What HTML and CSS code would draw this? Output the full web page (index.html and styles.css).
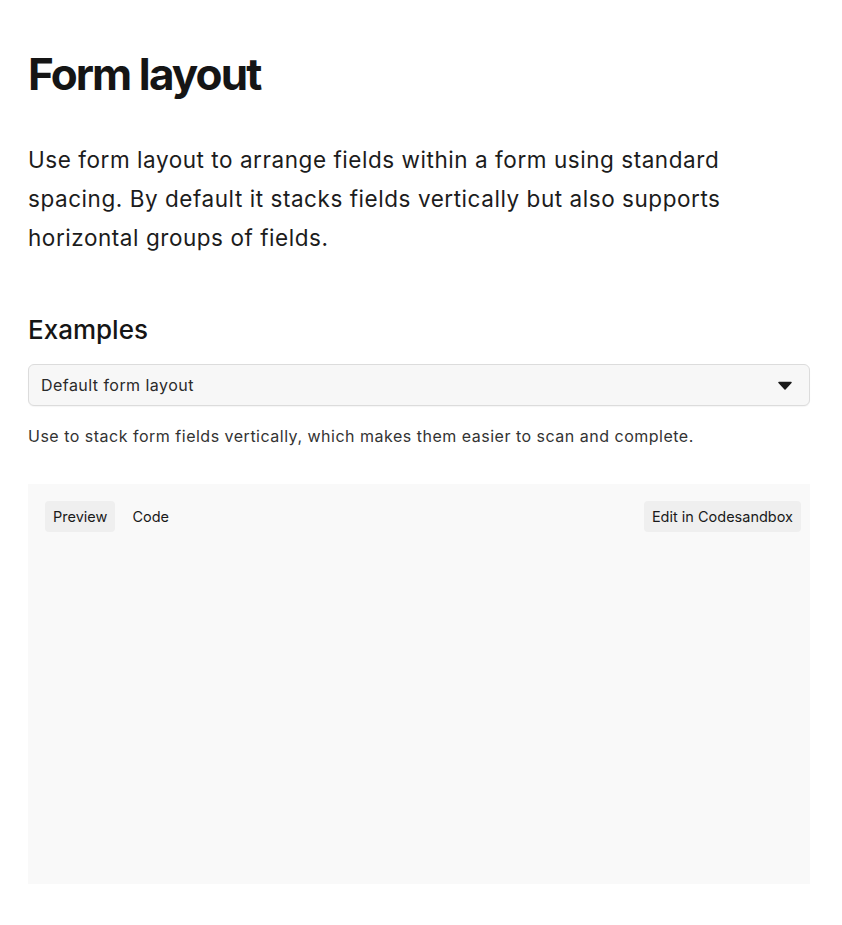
FILE: index.html
```html
<!DOCTYPE html>
<html>
<head>
<meta charset="utf-8">
<link rel="stylesheet" href="styles.css">
</head>
<body>
<main class="page">
  <h1 class="title">Form layout</h1>
  <p class="lead">Use form layout to arrange fields within a form using standard spacing. By default it stacks fields vertically but also supports horizontal groups of fields.</p>
  <h2 class="section">Examples</h2>
  <div class="select">
    <span>Default form layout</span>
    <svg class="caret" width="14" height="9" viewBox="0 0 14 9"><path d="M1 1.5 L13 1.5 L7 8 Z" fill="#1a1a1a" stroke="#1a1a1a" stroke-width="1.5" stroke-linejoin="round"/></svg>
  </div>
  <p class="desc">Use to stack form fields vertically, which makes them easier to scan and complete.</p>
  <div class="preview">
    <div class="toolbar">
      <div class="tabs">
        <span class="btn active">Preview</span>
        <span class="btn">Code</span>
      </div>
      <span class="btn active">Edit in Codesandbox</span>
    </div>
  </div>
</main>
</body>
</html>
```
FILE: styles.css
```css
* { box-sizing: border-box; }
body {
  margin: 0;
  background: #fff;
  color: #151515;
  font-family: Inter, "Noto Sans", sans-serif;
}
.page {
  padding: 46px 32px 40px 28px;
  width: 842px;
}
.title {
  margin: 0;
  font-size: 44px;
  font-weight: 700;
  letter-spacing: -1.9px;
  line-height: 56px;
}
.lead {
  margin: 38px 0 0;
  font-size: 22.5px;
  line-height: 39px;
  letter-spacing: 0.55px;
  color: #1c1c1c;
  max-width: 740px;
}
.section {
  margin: 56px 0 0;
  font-size: 26px;
  font-weight: 500;
  line-height: 34px;
}
.select {
  margin-top: 17px;
  height: 42px;
  border: 1px solid #dcdcdc;
  border-radius: 6px;
  background: #f7f7f7;
  display: flex;
  align-items: center;
  justify-content: space-between;
  padding: 0 17px 0 12px;
  font-size: 16px;
  letter-spacing: 0.45px;
  color: #2a2a2a;
  box-shadow: 0 1px 1px rgba(0,0,0,0.04);
}
.desc {
  margin: 19px 0 0;
  font-size: 16px;
  letter-spacing: 0.5px;
  line-height: 22px;
  color: #333;
}
.preview {
  margin-top: 37px;
  height: 400px;
  background: #f9f9f9;
  padding: 17px 9px 0 17px;
}
.toolbar {
  display: flex;
  justify-content: space-between;
  align-items: center;
}
.tabs { display: flex; gap: 0; }
.btn {
  display: inline-block;
  height: 31px;
  line-height: 31px;
  padding: 0 8px;
  border-radius: 4px;
  font-size: 14.5px;
  color: #1a1a1a;
}
.tabs .btn + .btn { margin-left: 9px; }
.btn.active { background: #efefef; }
```
